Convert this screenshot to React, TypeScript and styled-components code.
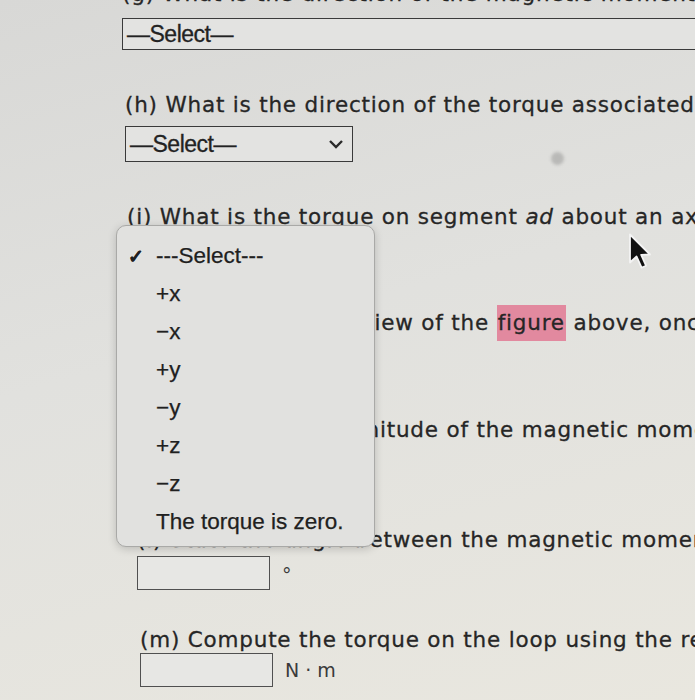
import { createGlobalStyle, styled } from "styled-components"

const GlobalStyle = createGlobalStyle`
  html, body {
    margin: 0;
    padding: 0;
    width: 695px;
    height: 700px;
    overflow: hidden;
  }
  body {
    background: linear-gradient(165deg, #d8d8d6 0%, #e1e1de 45%, #e9e7df 100%);
    font-family: "DejaVu Sans", Verdana, sans-serif;
    color: #262626;
  }
`

const Page = styled.div`
  position: relative;
  width: 695px;
  height: 700px;
  overflow: hidden;
`

const Sheet = styled.div`
  display: flex;
  flex-direction: column;
  margin-top: -19px;
`

const Block = styled.section<{ $indent: number; $gap: number }>`
  display: flex;
  flex-direction: column;
  align-items: flex-start;
  padding-left: ${({ $indent }) => $indent}px;
  margin-top: ${({ $gap }) => $gap}px;
`

const Prompt = styled.p`
  margin: 0;
  font-size: 21.5px;
  line-height: 26px;
  letter-spacing: 0.8px;
  white-space: nowrap;
  -webkit-text-stroke: 0.3px #262626;
  em {
    font-style: italic;
  }
`

const Mark = styled.span`
  background: #e2899f;
  padding: 5px 1px 6px;
`

const SelectBox = styled.div<{ $width: number; $height: number }>`
  box-sizing: border-box;
  width: ${({ $width }) => $width}px;
  height: ${({ $height }) => $height}px;
  margin-top: 8px;
  display: flex;
  align-items: center;
  justify-content: space-between;
  padding: 0 8px 0 4px;
  border: 1.5px solid #3a3a3a;
  background: #e3e3e1;
  font-family: "Liberation Sans", Arial, sans-serif;
  font-size: 23px;
  letter-spacing: -0.5px;
  color: #222;
  -webkit-text-stroke: 0.3px #222;
`

const AnswerRow = styled.div<{ $top: number }>`
  display: flex;
  align-items: center;
  gap: 12px;
  margin-top: ${({ $top }) => $top}px;
`

const Input = styled.div`
  box-sizing: border-box;
  width: 133px;
  height: 34px;
  border: 1.5px solid #505050;
  background: #e7e7e4;
`

const Unit = styled.span<{ $raise: number }>`
  font-size: 19px;
  color: #3a3a3a;
  position: relative;
  top: ${({ $raise }) => -$raise}px;
`

const Menu = styled.ul`
  position: absolute;
  left: 116px;
  top: 225px;
  box-sizing: border-box;
  width: 259px;
  height: 322px;
  margin: 0;
  padding: 11px 0 0;
  list-style: none;
  border: 1px solid #a9a9a7;
  border-radius: 10px;
  background: #e1e1df;
  box-shadow: 0 2px 8px rgba(0, 0, 0, 0.18);
  font-family: "Liberation Sans", Arial, sans-serif;
  font-size: 22.5px;
  color: #202020;
  -webkit-text-stroke: 0.25px #202020;
`

const Item = styled.li`
  display: flex;
  align-items: center;
  height: 38px;
  padding-left: 11px;
`

const Check = styled.span`
  width: 28px;
  font-size: 19px;
  font-weight: bold;
`

const Cursor = styled.svg`
  position: absolute;
  left: 628px;
  top: 232px;
`

const Smudge = styled.div`
  position: absolute;
  left: 551px;
  top: 152px;
  width: 13px;
  height: 13px;
  border-radius: 50%;
  background: #b9b9b7;
  filter: blur(1.5px);
`

const Chevron = () => (
  <svg width="16" height="10" viewBox="0 0 16 10">
    <path d="M2 2 L8 8 L14 2" fill="none" stroke="#2a2a2a" strokeWidth="2.4" />
  </svg>
)

const options = ["+x", "\u2212x", "+y", "\u2212y", "+z", "\u2212z", "The torque is zero."]

const App = () => {
  return (
    <Page>
      <GlobalStyle />
      <Sheet>
        <Block $indent={122} $gap={0}>
          <Prompt>(g) What is the direction of the magnetic moment</Prompt>
          <SelectBox $width={640} $height={32} style={{ marginTop: 11 }}>
            —Select—
          </SelectBox>
        </Block>

        <Block $indent={125} $gap={42}>
          <Prompt>(h) What is the direction of the torque associated</Prompt>
          <SelectBox $width={228} $height={36}>
            —Select—
            <Chevron />
          </SelectBox>
        </Block>

        <Block $indent={127} $gap={42}>
          <Prompt>
            (i) What is the torque on segment <em>ad</em> about an axis
          </Prompt>
          <SelectBox $width={228} $height={36}>
            —Select—
            <Chevron />
          </SelectBox>
        </Block>

        <Block $indent={124} $gap={36}>
          <Prompt>
            (j) Based on the top view of the <Mark>figure</Mark> above, once
          </Prompt>
          <SelectBox $width={228} $height={36}>
            —Select—
            <Chevron />
          </SelectBox>
        </Block>

        <Block $indent={137} $gap={37}>
          <Prompt>(k) What is the magnitude of the magnetic moment</Prompt>
          <AnswerRow $top={0}>
            <Input />
          </AnswerRow>
        </Block>

        <Block $indent={137} $gap={50}>
          <Prompt>(l) State the angle between the magnetic moment</Prompt>
          <AnswerRow $top={3}>
            <Input />
            <Unit $raise={-2}>°</Unit>
          </AnswerRow>
        </Block>

        <Block $indent={140} $gap={37}>
          <Prompt>(m) Compute the torque on the loop using the results</Prompt>
          <AnswerRow $top={0}>
            <Input />
            <Unit $raise={0}>N · m</Unit>
          </AnswerRow>
        </Block>
      </Sheet>

      <Smudge />

      <Menu>
        <Item>
          <Check>✓</Check>---Select---
        </Item>
        {options.map((each, index) => (
          <Item key={index}>
            <Check />
            {each}
          </Item>
        ))}
      </Menu>

      <Cursor width="26" height="39" viewBox="0 0 13 19">
        <path
          d="M1 1 L1 15 L4.3 12 L6.8 17.6 L9 16.6 L6.6 11.2 L11 11 Z"
          fill="#111"
          stroke="#f4f4f4"
          strokeWidth="0.9"
          strokeLinejoin="round"
        />
      </Cursor>
    </Page>
  )
}

export default App
